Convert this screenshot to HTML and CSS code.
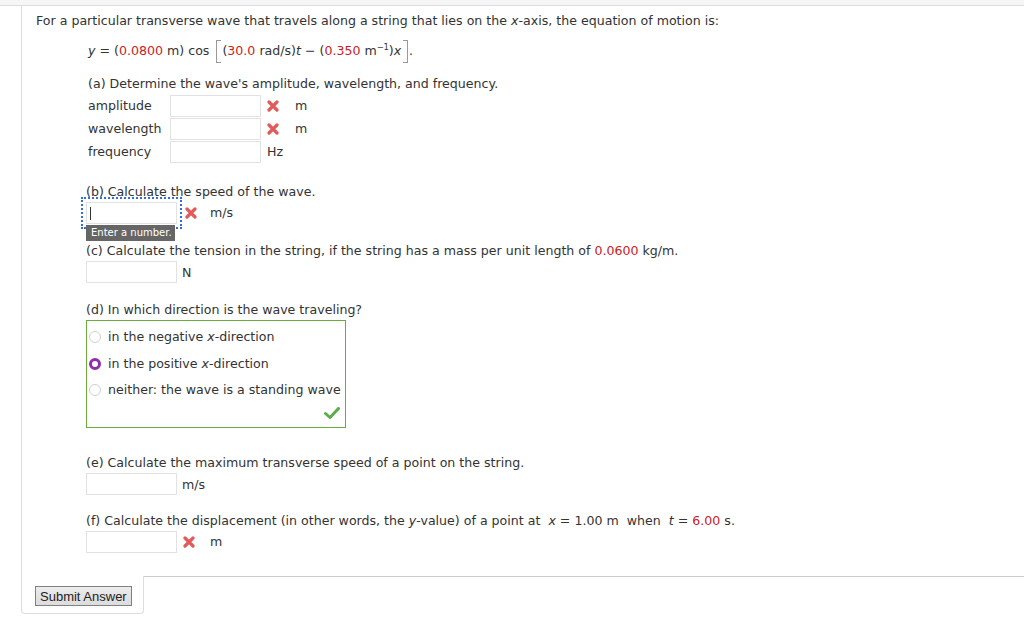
FILE: index.html
```html
<!DOCTYPE html>
<html>
<head>
<meta charset="utf-8">
<link rel="stylesheet" href="styles.css">
</head>
<body>
<div class="topbar"></div>
<div class="panel">
  <p class="intro">For a particular transverse wave that travels along a string that lies on the <i>x</i>-axis, the equation of motion is:</p>
  <div class="part">
    <div class="eq"><i>y</i> = (<span class="red">0.0800</span> m) cos <span class="brk brk-l"></span>(<span class="red">30.0</span> rad/s)<i>t</i> − (<span class="red">0.350</span> m<sup>−1</sup>)<i>x</i><span class="brk brk-r"></span>.</div>

    <p class="q qa">(a) Determine the wave's amplitude, wavelength, and frequency.</p>
    <div class="grid">
      <span class="lbl">amplitude</span><span class="inp"></span><span class="mark"><svg class="xic" viewBox="0 0 12 12"><path d="M2 2L10 10M10 2L2 10"/></svg></span><span class="unit">m</span>
      <span class="lbl">wavelength</span><span class="inp"></span><span class="mark"><svg class="xic" viewBox="0 0 12 12"><path d="M2 2L10 10M10 2L2 10"/></svg></span><span class="unit">m</span>
      <span class="lbl">frequency</span><span class="inp"></span><span class="mark"></span><span class="unit hz">Hz</span>
    </div>

    <p class="q qb">(b) Calculate the speed of the wave.</p>
    <div class="row">
      <span class="inp focus"><span class="caret"></span><span class="tip">Enter a number.</span></span>
      <svg class="xic xb" viewBox="0 0 12 12"><path d="M2 2L10 10M10 2L2 10"/></svg><span class="unit u-b">m/s</span>
    </div>

    <p class="q qc">(c) Calculate the tension in the string, if the string has a mass per unit length of <span class="red">0.0600</span> kg/m.</p>
    <div class="row"><span class="inp"></span><span class="unit u-plain">N</span></div>

    <p class="q qd">(d) In which direction is the wave traveling?</p>
    <div class="choices">
      <div class="choice"><span class="radio"></span><span class="ctext">in the negative <i>x</i>-direction</span></div>
      <div class="choice"><span class="radio on"></span><span class="ctext">in the positive <i>x</i>-direction</span></div>
      <div class="choice"><span class="radio"></span><span class="ctext">neither: the wave is a standing wave</span></div>
      <svg class="check" viewBox="0 0 16 12"><path d="M1.5 6.5L6 10.5L14.5 1.5"/></svg>
    </div>

    <p class="q qe">(e) Calculate the maximum transverse speed of a point on the string.</p>
    <div class="row"><span class="inp"></span><span class="unit u-plain">m/s</span></div>

    <p class="q qf">(f) Calculate the displacement (in other words, the <i>y</i>-value) of a point at &nbsp;<i>x</i> = 1.00 m &nbsp;when &nbsp;<i>t</i> = <span class="red">6.00</span> s.</p>
    <div class="row">
      <span class="inp"></span>
      <svg class="xic xf" viewBox="0 0 12 12"><path d="M2 2L10 10M10 2L2 10"/></svg><span class="unit u-f">m</span>
    </div>
  </div>
</div>
<div class="footer">
  <div class="tab"><button class="submit">Submit Answer</button></div>
  <div class="rest"></div>
</div>
</body>
</html>
```

FILE: styles.css
```css
html, body {
  margin: 0;
  padding: 0;
  background: #fff;
}
body {
  font-family: "DejaVu Sans", Verdana, sans-serif;
  font-size: 12.6px;
  color: #333;
}
i { font-style: italic; }
.red { color: #c9211e; }

.topbar {
  height: 5px;
  background: #f6f6f6;
  border-bottom: 1px solid #ddd;
}
.panel {
  margin-left: 21px;
  border-left: 1px solid #ddd;
  padding: 6px 0 23px 14px;
}
.intro {
  margin: 0;
  line-height: 18px;
}
.part {
  padding-left: 52px;
}
.eq {
  margin-top: 9px;
  height: 24px;
  line-height: 24px;
  display: flex;
  align-items: center;
  white-space: pre;
}
.eq sup {
  font-size: 8.5px;
  line-height: 0;
  position: relative;
  top: -4px;
  letter-spacing: -0.3px;
}
.brk {
  display: inline-block;
  width: 4px;
  height: 21px;
  border: 1.5px solid #999;
  margin: 0 1px;
}
.brk-l { border-right: none; margin-left: 3px; }
.brk-r { border-left: none; margin-left: 2px; }

.q {
  margin: 0;
  line-height: 18px;
}
.qa { margin-top: 12px; }
.qb { margin-top: 20px; margin-left: -2px; }
.qc { margin-top: 18px; margin-left: -2px; }
.qd { margin-top: 18px; margin-left: -2px; }
.qe { margin-top: 26px; margin-left: -2px; }
.qf { margin-top: 17px; margin-left: -2px; }

.grid {
  margin-top: 1px;
  display: grid;
  grid-template-columns: 82px 91px 34px auto;
  grid-auto-rows: 23px;
  align-items: center;
}
.grid .hz { margin-left: -28px; }
.mark { display: flex; align-items: center; padding-left: 6px; }

.inp {
  display: inline-block;
  box-sizing: border-box;
  width: 91px;
  height: 22px;
  border: 1px solid #e2e2e2;
  background: #fff;
  position: relative;
}
.row {
  display: flex;
  align-items: center;
  height: 23px;
  margin-left: -2px;
}
.focus {
  outline: 2px dotted #2f6fd6;
  outline-offset: 3px;
}
.caret {
  position: absolute;
  left: 3px;
  top: 4px;
  width: 1px;
  height: 13px;
  background: #333;
}
.tip {
  position: absolute;
  left: -1px;
  top: 22px;
  background: #666;
  color: #fff;
  font-size: 10px;
  line-height: 16px;
  padding: 0 3px 0 5px;
  white-space: nowrap;
}
.xic {
  width: 12px;
  height: 12px;
  fill: none;
  stroke: #e35a5a;
  stroke-width: 3.2;
  stroke-linecap: round;
}
.xb { margin-left: 8px; }
.xf { margin-left: 6px; }
.u-b { margin-left: 13px; }
.u-f { margin-left: 15px; }
.u-plain { margin-left: 5px; position: relative; top: 1px; }

.choices {
  margin-top: 1px;
  margin-left: -2px;
  width: 260px;
  height: 108px;
  box-sizing: border-box;
  border: 1px solid #6aab3a;
  padding-top: 6px;
  position: relative;
}
.choice {
  height: 26.5px;
  line-height: 20px;
  display: flex;
  align-items: flex-start;
  white-space: nowrap;
}
.radio {
  box-sizing: border-box;
  width: 12px;
  height: 12px;
  border-radius: 50%;
  border: 1px solid #d0d0d0;
  background: #fff;
  margin: 4px 7px 0 2px;
  flex: none;
}
.radio.on {
  border: 3.5px solid #8e2ea8;
}
.check {
  position: absolute;
  right: 5px;
  bottom: 8px;
  width: 16px;
  height: 12px;
  fill: none;
  stroke: #5cad4a;
  stroke-width: 3;
  stroke-linecap: round;
  stroke-linejoin: round;
}

.footer {
  display: flex;
  margin-left: 21px;
}
.tab {
  width: 123px;
  border: 1px solid #ddd;
  border-top: none;
  border-radius: 0 0 4px 4px;
  padding: 10px 0 7px 13px;
  box-sizing: border-box;
}
.rest {
  flex: 1;
  border-top: 1px solid #ccc;
}
.submit {
  font-family: "Liberation Sans", Arial, sans-serif;
  font-size: 13px;
  color: #222;
  height: 20px;
  padding: 0 4px;
  background: linear-gradient(#ececec, #dcdcdc);
  border: 1px solid #808080;
  border-radius: 0;
}
```
